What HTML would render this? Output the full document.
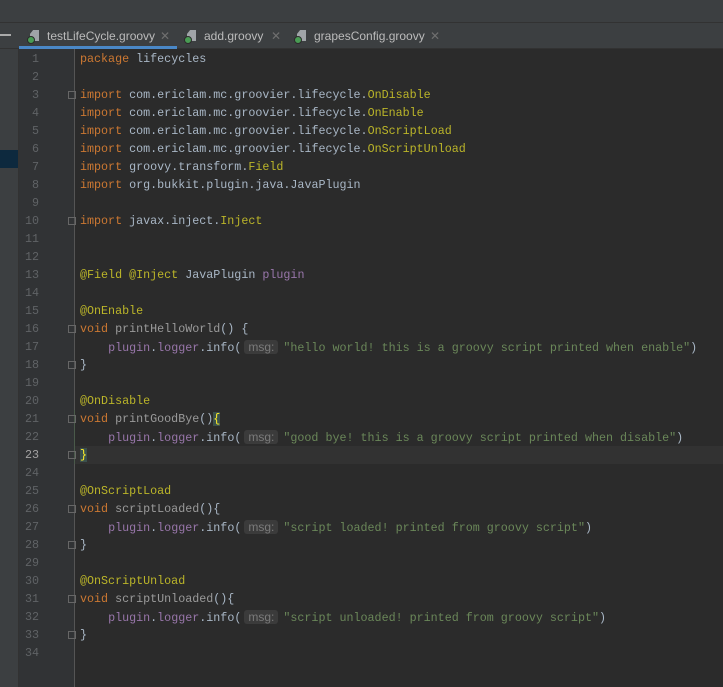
<!DOCTYPE html>
<html><head><style>
body{margin:0;width:723px;height:687px;overflow:hidden;background:#2b2b2b;font-family:"Liberation Sans",sans-serif;position:relative}
.top{position:absolute;left:0;top:0;width:723px;height:22px;background:#3c3f41;border-bottom:1px solid #323232}
.tabs{position:absolute;left:0;top:23px;width:723px;height:26px;background:#3c3f41;border-bottom:1px solid #323232;box-sizing:border-box}
.left{position:absolute;left:0;top:49px;width:18px;height:638px;background:#3c3f41;border-right:1px solid #323232}
.sel{position:absolute;left:0;top:150px;width:18px;height:18px;background:#0d293e}
.dash{position:absolute;left:0;top:34px;width:11px;height:2px;background:#aaa}
.tab{position:absolute;top:23px;height:25px;color:#bbbbbb;font-size:12px;line-height:26px}
.ic{position:absolute;top:7px;width:9px;height:11px;background:#a0a4a8;clip-path:polygon(35% 0,100% 0,100% 100%,0 100%,0 35%)}
.gc{position:absolute;top:13px;width:6px;height:6px;border-radius:50%;background:#499c54;border:1px solid #2b2b2b}
.x{position:absolute;top:0;color:#6f6f6f;font-size:12px}
.gut{position:absolute;left:19px;top:49px;width:55px;height:638px;background:#313335;border-right:1px solid #555}
.code{position:absolute;left:0;top:50px;width:723px;font-family:"Liberation Mono",monospace;font-size:11.7px;line-height:18px;color:#a9b7c6}
.ln{position:absolute;left:17px;width:22px;text-align:right;color:#606366}
.t{position:absolute;left:80px;white-space:pre}
.k{color:#cc7832}.a{color:#bbb529}.s{color:#6a8759}.p{color:#9876aa}.g{color:#9a9a9a}
.h{background:#3b3b3b;color:#7a7a7a;border-radius:3px;padding:0 4px;margin:0 5px 0 3px;font-family:"Liberation Sans",sans-serif;font-size:12px}
.cur{position:absolute;left:75px;top:446px;width:648px;height:18px;background:#323232}
.fold{position:absolute;left:68px;width:8px;height:8px;border:1px solid #666;box-sizing:border-box}
</style></head><body>
<div class="top"></div>
<div class="tabs"></div>
<div class="dash"></div>
<div style="position:absolute;left:19px;top:46px;width:158px;height:3px;background:#4a88c7"></div>
<div class="tab" style="left:27px;width:150px"><div class="ic" style="left:3px"></div><div class="gc" style="left:0"></div><span style="position:absolute;left:20px">testLifeCycle.groovy</span><span class="x" style="left:133px">✕</span></div>
<div class="tab" style="left:184px;width:110px"><div class="ic" style="left:3px"></div><div class="gc" style="left:0"></div><span style="position:absolute;left:20px">add.groovy</span><span class="x" style="left:87px">✕</span></div>
<div class="tab" style="left:294px;width:150px"><div class="ic" style="left:3px"></div><div class="gc" style="left:0"></div><span style="position:absolute;left:20px">grapesConfig.groovy</span><span class="x" style="left:136px">✕</span></div>
<div class="left"></div><div class="sel"></div>
<div class="gut"></div>
<div class="cur"></div>
<div style="position:absolute;left:74px;top:410px;width:1px;height:54px;background:#4a5a4a"></div>
<div class="code">
<div class="ln" style="top:0">1</div><div class="ln" style="top:18px">2</div><div class="ln" style="top:36px">3</div><div class="ln" style="top:54px">4</div><div class="ln" style="top:72px">5</div><div class="ln" style="top:90px">6</div><div class="ln" style="top:108px">7</div><div class="ln" style="top:126px">8</div><div class="ln" style="top:144px">9</div><div class="ln" style="top:162px">10</div><div class="ln" style="top:180px">11</div><div class="ln" style="top:198px">12</div><div class="ln" style="top:216px">13</div><div class="ln" style="top:234px">14</div><div class="ln" style="top:252px">15</div><div class="ln" style="top:270px">16</div><div class="ln" style="top:288px">17</div><div class="ln" style="top:306px">18</div><div class="ln" style="top:324px">19</div><div class="ln" style="top:342px">20</div><div class="ln" style="top:360px">21</div><div class="ln" style="top:378px">22</div><div class="ln" style="top:396px;color:#a4a3a3">23</div><div class="ln" style="top:414px">24</div><div class="ln" style="top:432px">25</div><div class="ln" style="top:450px">26</div><div class="ln" style="top:468px">27</div><div class="ln" style="top:486px">28</div><div class="ln" style="top:504px">29</div><div class="ln" style="top:522px">30</div><div class="ln" style="top:540px">31</div><div class="ln" style="top:558px">32</div><div class="ln" style="top:576px">33</div><div class="ln" style="top:594px">34</div>
<div class="t" style="top:0"><span class="k">package</span> lifecycles</div>
<div class="t" style="top:36px"><span class="k">import</span> com.ericlam.mc.groovier.lifecycle.<span class="a">OnDisable</span></div>
<div class="t" style="top:54px"><span class="k">import</span> com.ericlam.mc.groovier.lifecycle.<span class="a">OnEnable</span></div>
<div class="t" style="top:72px"><span class="k">import</span> com.ericlam.mc.groovier.lifecycle.<span class="a">OnScriptLoad</span></div>
<div class="t" style="top:90px"><span class="k">import</span> com.ericlam.mc.groovier.lifecycle.<span class="a">OnScriptUnload</span></div>
<div class="t" style="top:108px"><span class="k">import</span> groovy.transform.<span class="a">Field</span></div>
<div class="t" style="top:126px"><span class="k">import</span> org.bukkit.plugin.java.JavaPlugin</div>
<div class="t" style="top:162px"><span class="k">import</span> javax.inject.<span class="a">Inject</span></div>
<div class="t" style="top:216px"><span class="a">@Field @Inject</span> JavaPlugin <span class="p">plugin</span></div>
<div class="t" style="top:252px"><span class="a">@OnEnable</span></div>
<div class="t" style="top:270px"><span class="k">void</span> <span class="g">printHelloWorld</span>() {</div>
<div class="t" style="top:288px">    <span class="p">plugin</span>.<span class="p">logger</span>.info(<span class="h">msg:</span><span class="s">"hello world! this is a groovy script printed when enable"</span>)</div>
<div class="t" style="top:306px">}</div>
<div class="t" style="top:342px"><span class="a">@OnDisable</span></div>
<div class="t" style="top:360px"><span class="k">void</span> <span class="g">printGoodBye</span>()<span style="color:#ffef28;background:#3b514d">{</span></div>
<div class="t" style="top:378px">    <span class="p">plugin</span>.<span class="p">logger</span>.info(<span class="h">msg:</span><span class="s">"good bye! this is a groovy script printed when disable"</span>)</div>
<div class="t" style="top:396px"><span style="color:#ffef28;background:#3b514d">}</span></div>
<div class="t" style="top:432px"><span class="a">@OnScriptLoad</span></div>
<div class="t" style="top:450px"><span class="k">void</span> <span class="g">scriptLoaded</span>(){</div>
<div class="t" style="top:468px">    <span class="p">plugin</span>.<span class="p">logger</span>.info(<span class="h">msg:</span><span class="s">"script loaded! printed from groovy script"</span>)</div>
<div class="t" style="top:486px">}</div>
<div class="t" style="top:522px"><span class="a">@OnScriptUnload</span></div>
<div class="t" style="top:540px"><span class="k">void</span> <span class="g">scriptUnloaded</span>(){</div>
<div class="t" style="top:558px">    <span class="p">plugin</span>.<span class="p">logger</span>.info(<span class="h">msg:</span><span class="s">"script unloaded! printed from groovy script"</span>)</div>
<div class="t" style="top:576px">}</div>
<div class="fold" style="top:41px"></div><div class="fold" style="top:167px"></div>
<div class="fold" style="top:275px"></div><div class="fold" style="top:311px"></div>
<div class="fold" style="top:365px"></div><div class="fold" style="top:401px"></div>
<div class="fold" style="top:455px"></div><div class="fold" style="top:491px"></div>
<div class="fold" style="top:545px"></div><div class="fold" style="top:581px"></div>
</div>
</body></html>
